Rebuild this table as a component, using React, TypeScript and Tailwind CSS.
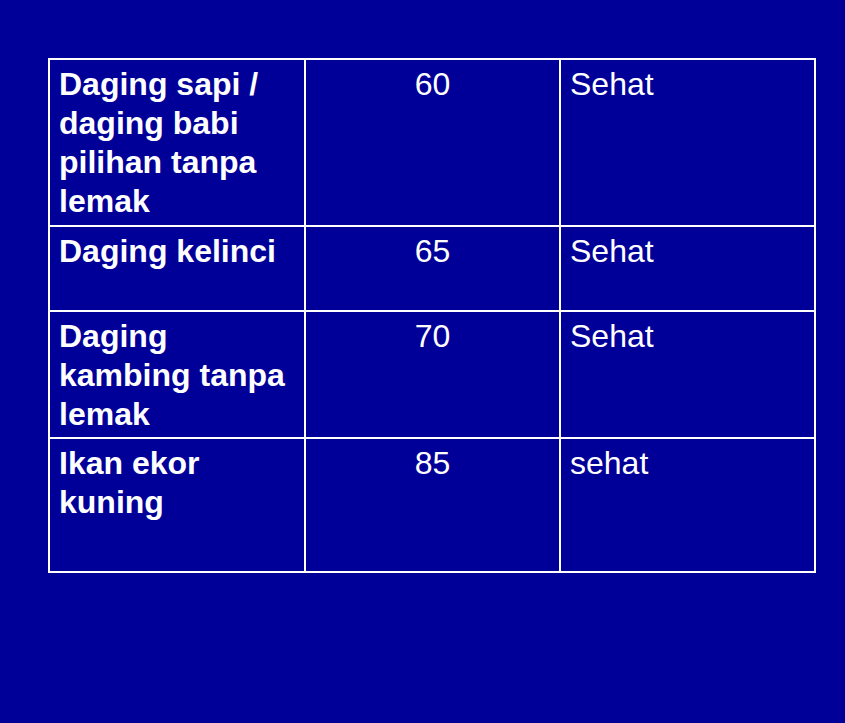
const rows = [
  { name: ["Daging sapi /", "daging babi", "pilihan tanpa", "lemak"], value: "60", note: "Sehat", h: "h-[167px]" },
  { name: ["Daging kelinci"], value: "65", note: "Sehat", h: "h-[85px]" },
  { name: ["Daging", "kambing tanpa", "lemak"], value: "70", note: "Sehat", h: "h-[127px]" },
  { name: ["Ikan ekor", "kuning"], value: "85", note: "sehat", h: "h-[134px]" },
];

export default function App() {
  return (
    <div className="w-[845px] h-[723px] bg-[#000099] overflow-hidden pt-[58px] pl-[48px] font-['Liberation_Sans',Arial,sans-serif] text-white text-[32px] leading-[39px]">
      <div className="grid grid-cols-[256px_255px_255px] w-[768px] border-l-2 border-t-2 border-white">
        {rows.map((r) => (
          <div key={r.value} className="contents">
            <div className={`${r.h} border-r-2 border-b-2 border-white pl-[9px] pt-[5px] font-bold`}>
              {r.name.map((line) => (
                <div key={line}>{line}</div>
              ))}
            </div>
            <div className={`${r.h} border-r-2 border-b-2 border-white pt-[5px] text-center`}>{r.value}</div>
            <div className={`${r.h} border-r-2 border-b-2 border-white pl-[9px] pt-[5px]`}>{r.note}</div>
          </div>
        ))}
      </div>
    </div>
  );
}
